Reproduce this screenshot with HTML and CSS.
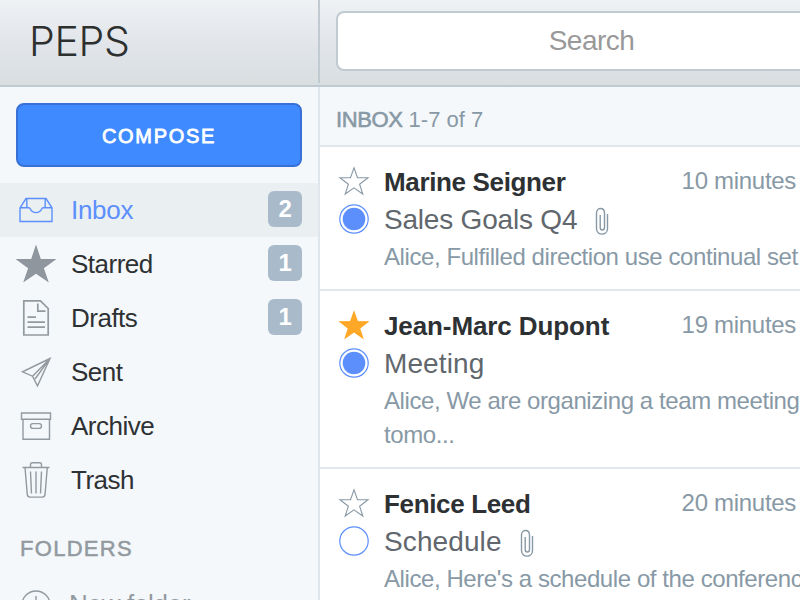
FILE: index.html
```html
<!DOCTYPE html>
<html lang="en">
<head>
    <meta charset="UTF-8">
    <meta name="viewport" content="width=device-width, initial-scale=1.0">
    <title>PEPS</title>
    <link rel="stylesheet" href="styles.css">
</head>
<body>
<!-- Shared icons -->
<svg class="sprite">
    <symbol id="star" viewBox="0 0 32 30"><path d="M16 1.8 L19.5 11.6 L30 11.8 L21.6 18.2 L24.8 28 L16 21.9 L7.2 28 L10.4 18.2 L2 11.8 L12.5 11.6 Z"/></symbol>
    <symbol id="clip" viewBox="0 0 14 30"><path d="M12.5 7 V21.5 C12.5 29 1.5 29 1.5 21.5 V6 C1.5 0 9.5 0 9.5 6 V20.5 C9.5 23.8 5.2 23.8 5.2 20.5 V8"/></symbol>
</svg>

<header>
    <h1>PEPS</h1>
    <div class="search-area">
        <input type="text" class="search" placeholder="Search">
    </div>
</header>

<div class="main">
    <nav class="sidebar">
        <button class="compose">COMPOSE</button>
        <ul class="boxes">
            <li class="box active">
                <svg class="icon" viewBox="0 0 42 42"><path d="M5 18.8 L11 9.5 H31 L37 18.8 V32.5 H5 Z M5 18.8 H14 C16 18.8 15 23.6 21 23.6 C27 23.6 26 18.8 28 18.8 H37 M11.8 9.5 V18.8 M30.2 9.5 V18.8"/></svg>
                <span class="label">Inbox</span><span class="badge">2</span>
            </li>
            <li class="box">
                <svg class="icon solid" viewBox="0 0 42 42"><path d="M21 1.5 L25.8 15.9 L41.5 16 L28.9 25.3 L33.8 39.5 L21 30.8 L8.2 39.5 L13.1 25.3 L0.5 16 L16.2 15.9 Z"/></svg>
                <span class="label">Starred</span><span class="badge">1</span>
            </li>
            <li class="box">
                <svg class="icon thick" viewBox="0 0 42 42"><path d="M8.8 3.8 H25.5 L33.2 11.5 V38 H8.8 Z M22.8 6.5 V14.2 H30.5 M12.5 20.2 H21 M12.5 25.2 H30 M12.5 30.2 H30"/></svg>
                <span class="label">Drafts</span><span class="badge">1</span>
            </li>
            <li class="box">
                <svg class="icon" viewBox="0 0 42 42"><path d="M35 7.5 L7.5 20.8 L17.5 25.2 L22.5 34.8 Z M17.5 25.2 L35 7.5 L20 28"/></svg>
                <span class="label">Sent</span>
            </li>
            <li class="box">
                <svg class="icon" viewBox="0 0 42 42"><path d="M6.5 8 H35.5 V14.2 H6.5 Z M8 14.2 V34.2 H34.5 V14.2"/><rect x="15.5" y="18.6" width="11" height="4.8" rx="2.4"/></svg>
                <span class="label">Archive</span>
            </li>
            <li class="box">
                <svg class="icon" viewBox="0 0 42 42"><path d="M7.5 8.5 H34.5 M15.5 8.5 V5.5 Q15.5 3.8 17.2 3.8 H24.8 Q26.5 3.8 26.5 5.5 V8.5 M10 8.5 L12.3 35.7 Q12.6 38.1 15 38.1 H27.5 Q29.7 38.1 30 35.7 L32.3 8.5 M15.5 12.5 L16.5 34.5 M21 12.5 V34.5 M26.5 12.5 L25.5 34.5"/></svg>
                <span class="label">Trash</span>
            </li>
        </ul>
        <h2>FOLDERS</h2>
        <div class="box new-folder">
            <svg class="icon" viewBox="0 0 42 42"><circle cx="21" cy="22" r="14"/><path d="M21 13 V31 M12 22 H30"/></svg>
            <span class="label">New folder</span>
        </div>
    </nav>

    <section class="list">
        <div class="list-header"><b>INBOX</b> 1-7 of 7</div>

        <article class="message">
            <div class="marks">
                <svg class="star"><use href="#star"/></svg>
                <svg class="dot unread" viewBox="0 0 30 30"><circle cx="15" cy="15" r="14.2"/><circle class="fill" cx="15" cy="15" r="11.3"/></svg>
            </div>
            <div class="content">
                <div class="top"><span class="sender">Marine Seigner</span><span class="time">10 minutes</span></div>
                <div class="subject tight">Sales Goals Q4 <svg class="clip"><use href="#clip"/></svg></div>
                <p class="snippet">Alice, Fulfilled direction use continual set</p>
            </div>
        </article>

        <article class="message">
            <div class="marks">
                <svg class="star starred"><use href="#star"/></svg>
                <svg class="dot unread" viewBox="0 0 30 30"><circle cx="15" cy="15" r="14.2"/><circle class="fill" cx="15" cy="15" r="11.3"/></svg>
            </div>
            <div class="content">
                <div class="top"><span class="sender wide">Jean-Marc Dupont</span><span class="time">19 minutes</span></div>
                <div class="subject">Meeting</div>
                <p class="snippet">Alice, We are organizing a team meeting<br>tomo...</p>
            </div>
        </article>

        <article class="message">
            <div class="marks">
                <svg class="star"><use href="#star"/></svg>
                <svg class="dot" viewBox="0 0 30 30"><circle cx="15" cy="15" r="14.2"/></svg>
            </div>
            <div class="content">
                <div class="top"><span class="sender">Fenice Leed</span><span class="time">20 minutes</span></div>
                <div class="subject">Schedule <svg class="clip"><use href="#clip"/></svg></div>
                <p class="snippet">Alice, Here's a schedule of the conference</p>
            </div>
        </article>
    </section>
</div>
</body>
</html>
```

FILE: styles.css
```css
* {
    box-sizing: border-box;
}
body {
    margin: 0;
    height: 600px;
    overflow: hidden;
    display: flex;
    flex-direction: column;
    font-family: "Liberation Sans", Arial, sans-serif;
    color: #2e3134;
    background: white;
}
.sprite {
    display: none;
}
header {
    display: flex;
    flex: none;
    align-items: flex-start;
    height: 87px;
    overflow: hidden;
    background: linear-gradient(#eef2f5, #e1e5e9 55%, #d9dee1);
    border-bottom: 2px solid #c0cbd1;
}
h1 {
    flex: none;
    margin: 0;
    width: 320px;
    height: 83px;
    padding-left: 29px;
    border-right: 2px solid #c0cbd1;
    font: 300 41px/82px Inter, sans-serif;
    letter-spacing: -0.3px;
    color: #2e3030;
}
.search-area {
    flex: 1;
    min-width: 0;
    padding: 11px 0 0 16px;
}
.search {
    display: block;
    width: 511px;
    height: 60px;
    border: 2px solid #c0cbd1;
    border-radius: 8px;
    background: white;
    text-align: center;
    font: 28px "Liberation Sans", Arial, sans-serif;
    letter-spacing: -0.5px;
}
.search::placeholder {
    color: #999;
}
.main {
    display: flex;
    flex: 1;
    min-height: 0;
}
.sidebar {
    width: 320px;
    flex: none;
    padding-top: 16px;
    background: #f4f8fb;
    border-right: 2px solid #e0e7ec;
    overflow: hidden;
}
.compose {
    display: block;
    width: 286px;
    height: 64px;
    margin: 0 16px 16px;
    padding: 2px 0 0;
    border: 2px solid #3870d8;
    border-radius: 8px;
    background: #3f8aff;
    color: white;
    font: 20px "Liberation Sans", Arial, sans-serif;
    letter-spacing: 1.7px;
    -webkit-text-stroke: 0.8px white;
}
.boxes {
    list-style: none;
    margin: 0;
    padding: 0;
}
.box {
    display: flex;
    align-items: center;
    height: 54px;
    padding: 0 16px 0 15px;
    font-size: 26px;
    letter-spacing: -0.5px;
}
.box.active {
    background: #eaeff2;
    color: #5c8ffc;
    letter-spacing: -0.3px;
}
.icon {
    width: 42px;
    height: 42px;
    margin-right: 14px;
    fill: none;
    stroke: #92999f;
    stroke-width: 1.4;
}
.icon.thick {
    stroke-width: 1.7;
}
.icon.solid {
    fill: #8f969d;
    stroke: none;
}
.active .icon {
    stroke: #5c8ffc;
}
.label {
    flex: 1;
}
.badge {
    width: 34px;
    height: 36px;
    margin-bottom: 2px;
    border-radius: 6px;
    background: #a9bacb;
    color: white;
    text-align: center;
    font: bold 24px/36px "Liberation Sans", Arial, sans-serif;
}
h2 {
    margin: 29px 0 0 20px;
    font-size: 22px;
    line-height: 26px;
    font-weight: normal;
    letter-spacing: 1.3px;
    color: #92999f;
    -webkit-text-stroke: 0.5px #92999f;
}
.new-folder {
    margin-top: 15px;
    color: #92999f;
    letter-spacing: -0.3px;
}
.new-folder .icon {
    margin-right: 12px;
}
.list {
    flex: 1;
    min-width: 0;
    overflow: hidden;
}
.list-header {
    height: 60px;
    padding-left: 16px;
    background: #f4f8fb;
    border-bottom: 2px solid #e0e7ec;
    font-size: 22px;
    line-height: 65px;
    color: #8899a6;
}
.list-header b {
    font-weight: normal;
    letter-spacing: -0.4px;
    -webkit-text-stroke: 0.6px #8899a6;
}
.message {
    display: flex;
    padding: 16px 0 15px 18px;
    border-bottom: 2px solid #e0e7ec;
    white-space: nowrap;
}
.marks {
    display: flex;
    flex-direction: column;
    align-items: center;
    width: 32px;
    margin-right: 14px;
}
.star {
    width: 32px;
    height: 30px;
    margin: 3px 0 8px;
    fill: none;
    stroke: #8899a6;
    stroke-width: 1.1;
}
.star.starred {
    fill: #ffa726;
    stroke: #ffa726;
}
.dot {
    width: 30px;
    height: 30px;
    fill: none;
    stroke: #5c8ffc;
    stroke-width: 1.2;
}
.dot .fill {
    fill: #5c8ffc;
    stroke: none;
}
.content {
    width: 412px;
}
.top {
    display: flex;
    justify-content: space-between;
    line-height: 38px;
}
.sender {
    font-size: 26px;
    font-weight: bold;
    letter-spacing: -0.35px;
}
.sender.wide {
    letter-spacing: -0.1px;
}
.time {
    font-size: 24px;
    line-height: 36px;
    letter-spacing: -0.3px;
    color: #8899a6;
}
.subject {
    display: flex;
    align-items: center;
    height: 38px;
    font-size: 28px;
    line-height: 38px;
    letter-spacing: 0.1px;
    color: #61676d;
}
.subject.tight {
    letter-spacing: -0.2px;
}
.clip {
    width: 14px;
    height: 30px;
    margin: 3px 0 0 18px;
    fill: none;
    stroke: #8899a6;
    stroke-width: 1.4;
}
.snippet {
    margin: 1px 0 0;
    font-size: 24px;
    line-height: 34px;
    letter-spacing: -0.42px;
    color: #8899a6;
}
```
